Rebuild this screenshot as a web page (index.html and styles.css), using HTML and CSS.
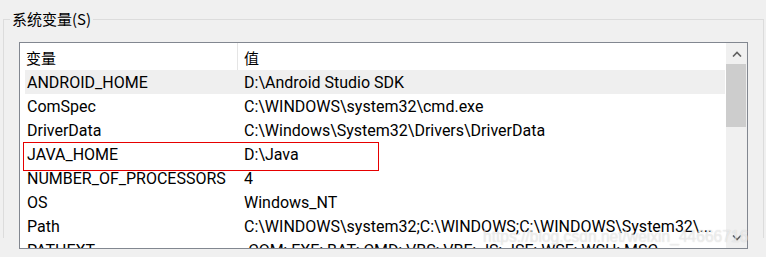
FILE: index.html
```html
<html>
<head>
  <link rel="stylesheet" href="styles.css">
</head>
<body>
  <fieldset class="group">
    <legend class="group-title">系统变量(S)</legend>

    <div class="list">
      <div class="list-body">
        <div class="list-head">
          <div class="head-cell">变量</div>
          <div class="head-cell head-value">值</div>
        </div>
        <div class="list-row selected">
          <div class="cell">ANDROID_HOME</div>
          <div class="cell">D:\Android Studio SDK</div>
        </div>
        <div class="list-row">
          <div class="cell">ComSpec</div>
          <div class="cell">C:\WINDOWS\system32\cmd.exe</div>
        </div>
        <div class="list-row">
          <div class="cell">DriverData</div>
          <div class="cell">C:\Windows\System32\Drivers\DriverData</div>
        </div>
        <div class="list-row">
          <div class="cell">JAVA_HOME</div>
          <div class="cell">D:\Java</div>
        </div>
        <div class="list-row">
          <div class="cell">NUMBER_OF_PROCESSORS</div>
          <div class="cell">4</div>
        </div>
        <div class="list-row">
          <div class="cell">OS</div>
          <div class="cell">Windows_NT</div>
        </div>
        <div class="list-row">
          <div class="cell">Path</div>
          <div class="cell">C:\WINDOWS\system32;C:\WINDOWS;C:\WINDOWS\System32\...</div>
        </div>
        <div class="list-row">
          <div class="cell">PATHEXT</div>
          <div class="cell">.COM;.EXE;.BAT;.CMD;.VBS;.VBE;.JS;.JSE;.WSF;.WSH;.MSC</div>
        </div>
      </div>

      <div class="scrollbar">
        <div class="scroll-btn btn-up">
          <svg width="10" height="6" viewBox="0 0 10 6"><polyline points="1,5.5 5,1.5 9,5.5" fill="none" stroke="#606060" stroke-width="1.6"/></svg>
        </div>
        <div class="scroll-track">
          <div class="scroll-thumb"></div>
        </div>
        <div class="scroll-btn btn-down">
          <svg width="10" height="6" viewBox="0 0 10 6"><polyline points="1,0.5 5,4.5 9,0.5" fill="none" stroke="#606060" stroke-width="1.6"/></svg>
        </div>
      </div>

      <!-- annotation drawn over the JAVA_HOME row -->
      <div class="mark"></div>
    </div>
  </fieldset>

  <div class="watermark">https://blog.csdn.net/weixin_44666716</div>
</body>
</html>
```

FILE: styles.css
```css
body {
  margin: 0;
  width: 766px;
  height: 257px;
  overflow: hidden;
  position: relative;
  background-color: #f0f0f0;
  font-family: Roboto, "Noto Sans CJK SC", sans-serif;
  font-size: 16px;
  color: #000000;
}

.group {
  margin: 9px 2px 0 3px;
  padding: 0 0 0 6px;
  border: 1px solid #dcdcdc;
  border-bottom: none;
  height: 228px;
}

.group-title {
  padding: 0 2px;
  font-family: "Noto Sans CJK SC", sans-serif;
  font-size: 15px;
  line-height: 20px;
  color: #000000;
}

.list {
  position: relative;
  display: flex;
  width: 727px;
  height: 205px;
  margin: 13px 0 0 9px;
  border: 1px solid #828790;
  background-color: #ffffff;
}

.list-body {
  width: 705px;
  overflow: hidden;
}

.list-head {
  display: flex;
  height: 27px;
  align-items: center;
  padding-top: 2px;
  box-sizing: border-box;
  font-size: 15px;
}

.head-cell {
  width: 211px;
  padding-left: 6px;
  font-family: "Noto Sans CJK SC", sans-serif;
}

.head-value {
  width: auto;
  flex: 1;
  height: 27px;
  margin-top: -2px;
  line-height: 29px;
  border-left: 1px solid #e5e5e5;
}

.list-row {
  display: flex;
  height: 24px;
  align-items: center;
  margin-left: 5px;
  white-space: nowrap;
}

.list-row.selected {
  background-color: #efefef;
}

.cell {
  padding-left: 2px;
}

.cell:first-child {
  width: 215px;
}

.scrollbar {
  display: flex;
  flex-direction: column;
  width: 21px;
  border-left: 1px solid #ffffff;
  background-color: #f0f0f0;
}

.scroll-btn {
  display: flex;
  align-items: center;
  justify-content: center;
}

.btn-up {
  height: 21px;
}

.btn-down {
  height: 20px;
}

.scroll-track {
  flex: 1;
}

.scroll-thumb {
  width: 20px;
  height: 63px;
  background-color: #cdcdcd;
}

.mark {
  position: absolute;
  left: 3px;
  top: 99px;
  width: 354px;
  height: 27px;
  border: 1px solid #e60000;
}

.watermark {
  position: absolute;
  left: 483px;
  top: 228px;
  font-family: "Liberation Sans", sans-serif;
  font-size: 15.6px;
  color: rgba(255, 255, 255, 0.55);
  text-shadow: 0 0 1px rgba(150, 150, 150, 0.45);
  white-space: nowrap;
}
```
